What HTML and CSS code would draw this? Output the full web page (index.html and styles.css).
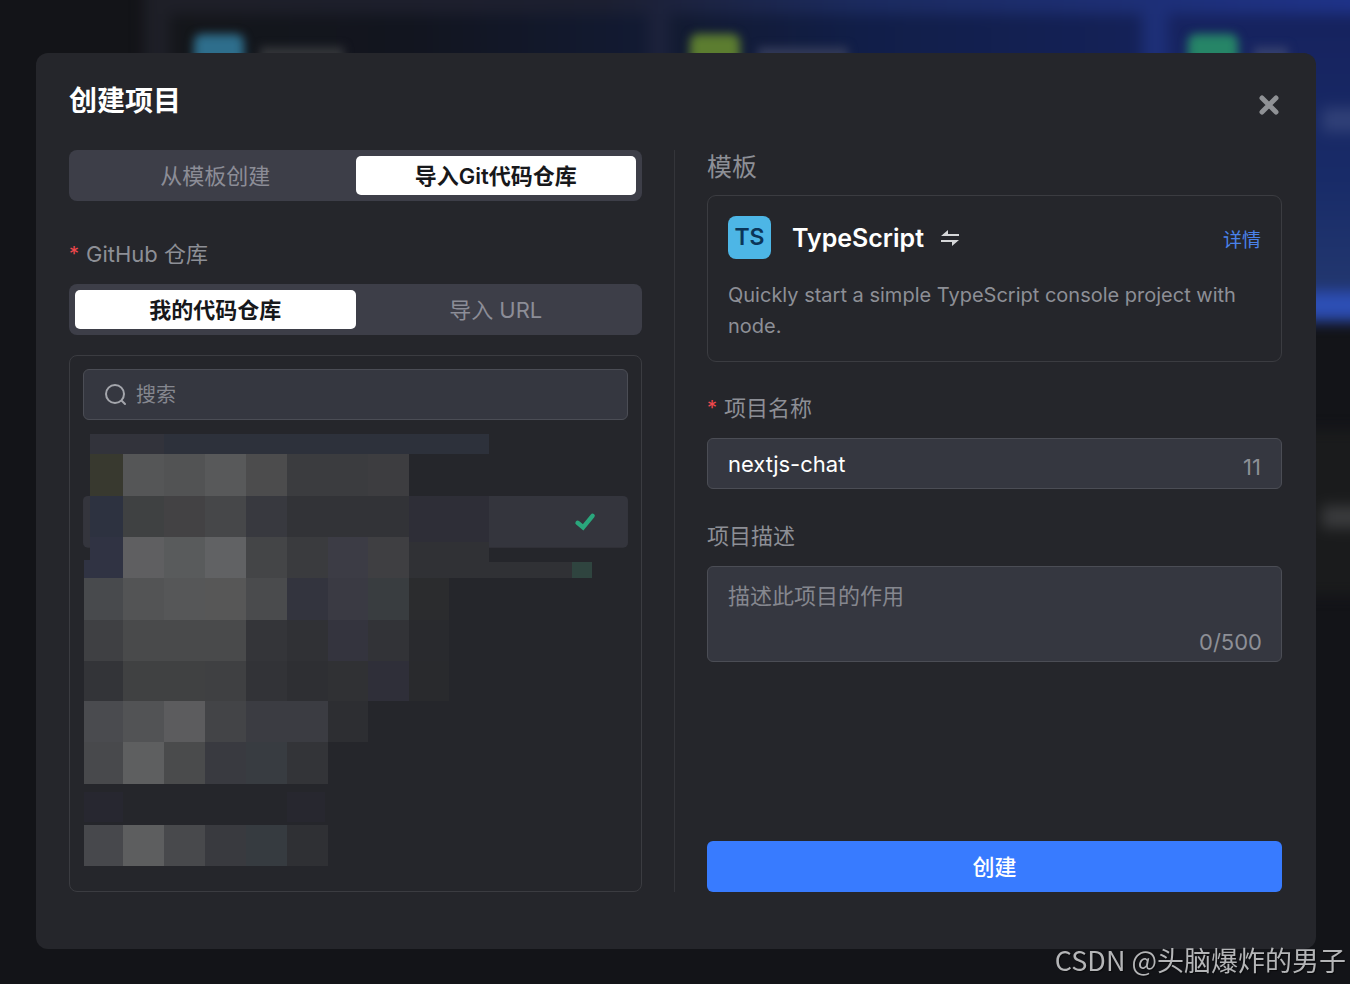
FILE: index.html
```
<!DOCTYPE html>
<html lang="zh-CN">
<head>
<meta charset="utf-8">
<meta name="viewport" content="width=device-width, initial-scale=1">
<title>创建项目</title>
<link rel="stylesheet" href="styles.css">
</head>
<body>
<svg class="backdrop" viewBox="0 0 1350 984" preserveAspectRatio="none" aria-hidden="true">
  <defs>
    <linearGradient id="edge" x1="0" x2="1"><stop offset="0" stop-color="#1e1f27"/><stop offset=".35" stop-color="#1c1f30"/><stop offset=".55" stop-color="#1b2a5e"/><stop offset="1" stop-color="#1f3490"/></linearGradient>
    <linearGradient id="c1" x1="0" x2="1"><stop offset="0" stop-color="#14161a"/><stop offset=".5" stop-color="#12151f"/><stop offset="1" stop-color="#121a33"/></linearGradient>
    <linearGradient id="c2" x1="0" x2="1"><stop offset="0" stop-color="#121a30"/><stop offset=".4" stop-color="#111e48"/><stop offset="1" stop-color="#142158"/></linearGradient>
    <linearGradient id="c3" x1="0" y1="0" x2="0" y2="1"><stop offset="0" stop-color="#16225e"/><stop offset=".6" stop-color="#182b68"/><stop offset="1" stop-color="#22376f"/></linearGradient>
    <filter id="soft" x="-50%" y="-50%" width="200%" height="200%" color-interpolation-filters="sRGB"><feGaussianBlur stdDeviation="7"/></filter>
    <filter id="tight" x="-50%" y="-50%" width="200%" height="200%" color-interpolation-filters="sRGB"><feGaussianBlur stdDeviation="5"/></filter>
  </defs>
  <rect width="1350" height="984" fill="#131418"/>
  <g filter="url(#soft)">
    <rect x="144" y="-30" width="1300" height="352" fill="url(#edge)"/>
    <rect x="170" y="14" width="478" height="270" fill="url(#c1)"/>
    <rect x="670" y="14" width="472" height="270" fill="url(#c2)"/>
    <rect x="1168" y="14" width="260" height="276" fill="url(#c3)"/>
    <rect x="1168" y="292" width="260" height="28" fill="#2d4fb5"/>
    <rect x="1168" y="430" width="260" height="165" fill="#1a1b1c"/>
    <rect x="1322" y="108" width="60" height="24" fill="#304077"/>
    <rect x="1322" y="506" width="60" height="22" fill="#3a3b3d"/>
  </g>
  <g filter="url(#tight)">
    <rect x="194" y="34" width="50" height="48" rx="8" fill="#2e6e8c"/>
    <rect x="690" y="34" width="50" height="48" rx="8" fill="#5c7d30"/>
    <rect x="1188" y="34" width="50" height="48" rx="8" fill="#268567"/>
    <rect x="260" y="47" width="84" height="16" fill="#34363a"/>
    <rect x="758" y="47" width="90" height="16" fill="#323a58"/>
    <rect x="1254" y="47" width="34" height="16" fill="#35406e"/>
  </g>
</svg>

<main class="modal" role="dialog" aria-labelledby="dialog-title">
  <header class="modal-head">
    <h1 class="modal-title" id="dialog-title">创建项目</h1>
    <button class="close" type="button" aria-label="关闭">
      <svg width="20" height="20" viewBox="0 0 20 20" fill="none" stroke="currentColor" stroke-width="5" stroke-linecap="round" aria-hidden="true"><path d="M3 3l14 14M17 3L3 17"/></svg>
    </button>
  </header>

  <form class="modal-body">
    <section class="source">
      <div class="segment" role="tablist">
        <button class="tab" type="button" role="tab" aria-selected="false">从模板创建</button>
        <button class="tab tab-on" type="button" role="tab" aria-selected="true">导入Git代码仓库</button>
      </div>

      <h2 class="label label-repo"><span class="star">*</span>GitHub 仓库</h2>
      <div class="segment" role="tablist">
        <button class="tab tab-on" type="button" role="tab" aria-selected="true">我的代码仓库</button>
        <button class="tab" type="button" role="tab" aria-selected="false">导入 URL</button>
      </div>

      <div class="repos">
        <label class="search">
          <svg width="24" height="24" viewBox="0 0 24 24" fill="none" stroke="currentColor" stroke-width="2" stroke-linecap="round" aria-hidden="true"><circle cx="11" cy="11" r="9"/><path d="M18 18l3 3"/></svg>
          <input class="search-input" type="search" placeholder="搜索" aria-label="搜索">
        </label>
        <svg class="mosaic" viewBox="83 433 546 436" shape-rendering="crispEdges" role="img" aria-label="代码仓库列表">
          <rect x="83" y="496" width="546" height="52" rx="5" fill="#34353d" shape-rendering="auto"/>
          <g>
            <rect x="90" y="434" width="74" height="20" fill="#32333b"/><rect x="164" y="434" width="326" height="20" fill="#2d313b"/>
            <rect x="90" y="454" width="33" height="42" fill="#38392f"/><rect x="123" y="454" width="41" height="42" fill="#555657"/><rect x="164" y="454" width="41" height="42" fill="#525354"/><rect x="205" y="454" width="41" height="42" fill="#58595a"/><rect x="246" y="454" width="41" height="42" fill="#4c4c4d"/><rect x="287" y="454" width="82" height="42" fill="#3b3c3f"/><rect x="369" y="454" width="41" height="42" fill="#3d3d40"/>
            <rect x="90" y="496" width="33" height="41" fill="#2d3240"/><rect x="123" y="496" width="41" height="41" fill="#3f4142"/><rect x="164" y="496" width="41" height="41" fill="#434244"/><rect x="205" y="496" width="41" height="41" fill="#464749"/><rect x="246" y="496" width="41" height="41" fill="#38393f"/><rect x="287" y="496" width="123" height="41" fill="#323337"/><rect x="410" y="496" width="80" height="46" fill="#2e2e37"/>
            <rect x="84" y="560" width="39" height="18" fill="#303343"/><rect x="90" y="537" width="33" height="41" fill="#303343"/><rect x="123" y="537" width="41" height="41" fill="#5f5f61"/><rect x="164" y="537" width="41" height="41" fill="#595b5c"/><rect x="205" y="537" width="41" height="41" fill="#616264"/><rect x="246" y="537" width="41" height="41" fill="#444547"/><rect x="287" y="537" width="41" height="41" fill="#3a3b3e"/><rect x="328" y="537" width="41" height="41" fill="#3c3c45"/><rect x="369" y="537" width="41" height="41" fill="#3f3f42"/><rect x="410" y="542" width="80" height="36" fill="#303135"/><rect x="490" y="562" width="83" height="16" fill="#303135"/><rect x="573" y="562" width="20" height="16" fill="#2f443f"/>
            <rect x="84" y="578" width="39" height="42" fill="#484a4d"/><rect x="123" y="578" width="41" height="42" fill="#535455"/><rect x="164" y="578" width="41" height="42" fill="#565758"/><rect x="205" y="578" width="41" height="42" fill="#575757"/><rect x="246" y="578" width="41" height="42" fill="#4a4b4d"/><rect x="287" y="578" width="41" height="42" fill="#33343e"/><rect x="328" y="578" width="41" height="42" fill="#3a3a43"/><rect x="369" y="578" width="41" height="42" fill="#393d40"/><rect x="410" y="578" width="40" height="42" fill="#2b2c2e"/>
            <rect x="84" y="620" width="39" height="41" fill="#3f4043"/><rect x="123" y="620" width="123" height="41" fill="#494a4b"/><rect x="246" y="620" width="41" height="41" fill="#343539"/><rect x="287" y="620" width="41" height="41" fill="#303135"/><rect x="328" y="620" width="41" height="41" fill="#34343e"/><rect x="369" y="620" width="41" height="41" fill="#323337"/><rect x="410" y="620" width="40" height="41" fill="#292a2e"/>
            <rect x="84" y="661" width="39" height="41" fill="#333438"/><rect x="123" y="661" width="82" height="41" fill="#404142"/><rect x="205" y="661" width="41" height="41" fill="#3f4042"/><rect x="246" y="661" width="41" height="41" fill="#323337"/><rect x="287" y="661" width="41" height="41" fill="#2e2f33"/><rect x="328" y="661" width="41" height="41" fill="#303134"/><rect x="369" y="661" width="41" height="41" fill="#2f2f39"/><rect x="410" y="661" width="40" height="41" fill="#292a2d"/>
            <rect x="84" y="702" width="39" height="41" fill="#4a4b4f"/><rect x="123" y="702" width="41" height="41" fill="#525355"/><rect x="164" y="702" width="41" height="41" fill="#5c5c5e"/><rect x="205" y="702" width="41" height="41" fill="#434447"/><rect x="246" y="702" width="82" height="41" fill="#3b3c42"/><rect x="328" y="702" width="41" height="41" fill="#2d2e32"/>
            <rect x="84" y="743" width="39" height="42" fill="#48494c"/><rect x="123" y="743" width="41" height="42" fill="#5e5f60"/><rect x="164" y="743" width="41" height="42" fill="#4a4b4c"/><rect x="205" y="743" width="41" height="42" fill="#393a40"/><rect x="246" y="743" width="41" height="42" fill="#383c41"/><rect x="287" y="743" width="41" height="42" fill="#333438"/>
            <rect x="84" y="793" width="39" height="30" fill="#272730"/><rect x="287" y="793" width="38" height="30" fill="#27272f"/>
            <rect x="84" y="826" width="39" height="41" fill="#47484c"/><rect x="123" y="826" width="41" height="41" fill="#5d5e5f"/><rect x="164" y="826" width="41" height="41" fill="#48494c"/><rect x="205" y="826" width="41" height="41" fill="#393a3f"/><rect x="246" y="826" width="41" height="41" fill="#363b40"/><rect x="287" y="826" width="41" height="41" fill="#2f3034"/>
          </g>
          <path d="M578.500 523l5.500 4.500 9.500-11.500" fill="none" stroke="#2aa67c" stroke-width="4.500" stroke-linecap="round" shape-rendering="auto"/>
        </svg>
      </div>
    </section>

    <div class="divider"></div>

    <section class="details">
      <h2 class="heading">模板</h2>
      <article class="template">
        <div class="template-head">
          <span class="logo" aria-hidden="true">TS</span>
          <h3 class="template-name">TypeScript</h3>
          <button class="swap" type="button" aria-label="切换模板">
            <svg width="20" height="16" viewBox="0 0 20 16" fill="none" stroke="currentColor" stroke-width="2" aria-hidden="true"><path d="M19 5H3M1 11h16"/><path d="M1 6L8 0v6zM19 10l-7 6v-6z" fill="currentColor" stroke="none"/></svg>
          </button>
          <a class="more" href="#details">详情</a>
        </div>
        <p class="template-text">Quickly start a simple TypeScript console project with node.</p>
      </article>

      <label class="label label-name" for="name"><span class="star">*</span>项目名称</label>
      <div class="field">
        <input class="field-input" id="name" type="text" value="nextjs-chat">
        <span class="count count-name">11</span>
      </div>

      <label class="label label-desc" for="desc">项目描述</label>
      <div class="field field-area">
        <textarea class="field-input area-input" id="desc" rows="1" placeholder="描述此项目的作用"></textarea>
        <span class="count count-area">0/500</span>
      </div>

      <button class="submit" type="submit">创建</button>
    </section>
  </form>
</main>
<div class="watermark">CSDN @头脑爆炸的男子</div>
</body>
</html>
```
FILE: styles.css
```
* {
  box-sizing: border-box;
}

body {
  margin: 0;
  min-height: 100vh;
  padding: 53px 34px 35px 36px;
  display: flex;
  background: #131418;
  color: #8d8f96;
  font-family: Inter, "Noto Sans CJK SC", sans-serif;
  font-size: 22px;
  line-height: 32px;
}

h1, h2, h3, p {
  margin: 0;
}

button, input, textarea {
  margin: 0;
  padding: 0;
  border: 0;
  background: none;
  color: inherit;
  font: inherit;
}

button {
  cursor: pointer;
}

.backdrop {
  position: fixed;
  inset: 0;
  width: 100%;
  height: 100%;
}

.modal {
  position: relative;
  flex: 1;
  display: flex;
  flex-direction: column;
  padding: 28px 34px 57px 33px;
  border-radius: 12px;
  background: #25262b;
}

.modal-head {
  display: flex;
  justify-content: space-between;
  align-items: center;
  height: 40px;
  margin-bottom: 29px;
}

.modal-title {
  color: #fff;
  font-size: 28px;
  font-weight: 600;
}

.close {
  display: flex;
  margin: 8px 3px 0 0;
  color: #8f9195;
}

.modal-body {
  flex: 1;
  display: grid;
  grid-template-columns: 573fr 1px 575fr;
  gap: 32px;
}

.divider {
  background: #34353a;
}

.source, .details {
  display: flex;
  flex-direction: column;
  min-width: 0;
}

.segment {
  display: grid;
  grid-template-columns: 1fr 1fr;
  padding: 6px;
  border-radius: 8px;
  background: #3d3e48;
}

.tab {
  height: 39px;
  border-radius: 5px;
  color: #8c8d97;
}

.tab-on {
  background: #fff;
  color: #17181b;
  font-weight: 600;
}

.label {
  display: flex;
  align-items: center;
  font-size: 22px;
  font-weight: 400;
}

.label-repo {
  margin: 37px 0 14px;
}

.star {
  width: 17px;
  color: #f0484d;
  font-size: 20px;
}

.repos {
  flex: 1;
  margin-top: 20px;
  padding: 13px;
  border: 1px solid #3b3c41;
  border-radius: 8px;
}

.search, .field {
  display: flex;
  align-items: center;
  height: 51px;
  padding: 0 20px;
  border: 1px solid #4b4d55;
  border-radius: 6px;
  background: #353740;
}

.search {
  gap: 8px;
  color: #a4a6ac;
}

.search-input {
  flex: 1;
  min-width: 0;
  font-size: 20px;
}

.search-input, .field-input {
  outline: 0;
}

::placeholder {
  color: #85878f;
  opacity: 1;
}

.mosaic {
  display: block;
  width: 100%;
  margin-top: 13px;
}

.heading {
  padding-top: 1px;
  font-size: 25px;
  font-weight: 400;
}

.template {
  margin-top: 12px;
  padding: 20px 20px 19px;
  border: 1px solid #3b3c41;
  border-radius: 9px;
}

.template-head {
  display: flex;
  align-items: center;
}

.logo {
  width: 43px;
  height: 43px;
  border-radius: 8px;
  background: #4db6e6;
  color: #0b3558;
  font-size: 23px;
  font-weight: 600;
  line-height: 43px;
  text-align: center;
}

.template-name {
  margin-left: 21px;
  color: #fff;
  font-size: 25px;
  font-weight: 600;
}

.swap {
  display: flex;
  margin-left: 16px;
  color: #d5d6d8;
}

.more {
  margin-left: auto;
  padding-top: 6px;
  color: #4a82ea;
  font-size: 19px;
  text-decoration: none;
}

.template-text {
  margin-top: 21px;
  font-size: 20px;
  line-height: 31px;
}

.label-name {
  margin: 30px 0 14px;
}

.field-input {
  flex: 1;
  min-width: 0;
  color: #fff;
}

.count {
  color: #8d8f96;
}

.count-name {
  padding-top: 6px;
}

.label-desc {
  margin: 31px 0 14px;
}

.field-area {
  flex-direction: column;
  align-items: stretch;
  height: 96px;
  padding: 13px 19px 3px 20px;
}

.area-input {
  resize: none;
  line-height: 32px;
}

.count-area {
  align-self: flex-end;
}

.submit {
  height: 51px;
  margin-top: auto;
  border-radius: 6px;
  background: #387bff;
  color: #fff;
  font-weight: 500;
}

.watermark {
  position: fixed;
  right: 4px;
  bottom: 4px;
  color: #b4b5b7;
  font-family: "Noto Sans CJK SC", sans-serif;
  font-size: 27px;
  line-height: 40px;
  text-shadow: 1px 1px 1px #0008;
}
```
